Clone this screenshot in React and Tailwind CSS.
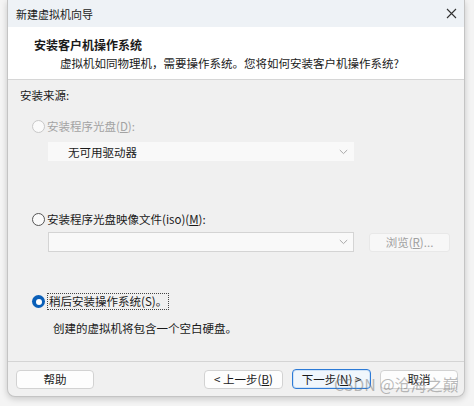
import React from "react";

const F = { fontFamily: '"Noto Sans CJK SC", "Noto Sans", sans-serif' };

function Chevron({ color = "#a8a8a8" }) {
  return (
    <svg width="9" height="6" viewBox="0 0 9 6" fill="none">
      <path d="M0.8 1 L4.5 4.6 L8.2 1" stroke={color} strokeWidth="1" />
    </svg>
  );
}

function Radio({ checked, disabled }) {
  if (checked) {
    return (
      <span className="flex h-[13px] w-[13px] items-center justify-center rounded-full bg-[#0a5fb8]">
        <span className="h-[6px] w-[6px] rounded-full bg-white" />
      </span>
    );
  }
  return (
    <span
      className={
        "h-[13px] w-[13px] rounded-full border bg-[#fafafa] " +
        (disabled ? "border-[#c8c8c8]" : "border-[#555555]")
      }
    />
  );
}

export default function App() {
  return (
    <div
      className="relative h-[406px] w-[474px] overflow-hidden bg-[#f4f4f4] pb-[9px] pl-[7px] pr-[9px] text-[11.5px] leading-[16px] text-[#1a1a1a]"
      style={F}
    >
      <div className="flex h-full flex-col overflow-hidden rounded-b-[8px] border-x border-b border-[#c4c4c4] bg-[#f0f0f0] shadow-[0_2px_6px_rgba(0,0,0,0.18)]">
        {/* title bar */}
        <div className="flex h-[27px] items-center justify-between bg-[#eef2f6] pl-[8px] pr-[7px]">
          <span className="text-[11px] text-[#1a1a1a]">新建虚拟机向导</span>
          <svg width="11" height="11" viewBox="0 0 11 11">
            <path d="M1 1 L10 10 M10 1 L1 10" stroke="#333" strokeWidth="1.1" />
          </svg>
        </div>
        {/* header */}
        <div className="flex h-[53px] flex-col border-b border-[#d6d6d6] bg-white pl-[26px] pt-[9px]">
          <span className="text-[12px] font-bold leading-[18px]">安装客户机操作系统</span>
          <span className="ml-[26px] mt-[1px] text-[11.5px] leading-[16px]">
            虚拟机如同物理机，需要操作系统。您将如何安装客户机操作系统?
          </span>
        </div>
        {/* content */}
        <div className="flex flex-1 flex-col pl-[12px] pr-[14px] pt-[7px]">
          <span>安装来源:</span>
          <div className="ml-[12px] mt-[15px] flex items-center gap-[2px] text-[#a3a3a3]">
            <Radio disabled />
            <span>
              安装程序光盘(<span className="underline">D</span>):
            </span>
          </div>
          <div className="ml-[28px] mt-[8px] flex h-[19px] w-[306px] items-center justify-between bg-[#f9f9f9] pl-[20px] pr-[6px]">
            <span className="text-[#1a1a1a]">无可用驱动器</span>
            <Chevron />
          </div>
          <div className="ml-[12px] mt-[50px] flex items-center gap-[2px]">
            <Radio />
            <span>
              安装程序光盘映像文件(iso)(<span className="underline">M</span>):
            </span>
          </div>
          <div className="ml-[28px] mt-[5px] flex items-center">
            <div className="flex h-[20px] w-[306px] items-center justify-end border border-[#d4d4d4] bg-[#f9f9f9] pr-[5px]">
              <Chevron />
            </div>
            <div className="ml-[15px] flex h-[19px] w-[81px] items-center justify-center rounded-[3px] border border-[#e8e8e8] bg-[#f7f7f7] text-[#a0a0a0]">
              浏览(<span className="underline">R</span>)...
            </div>
          </div>
          <div className="ml-[12px] mt-[41px] flex items-center gap-[2px]">
            <Radio checked />
            <span className="border border-dotted border-[#444] px-[1px] leading-[15px]">
              稍后安装操作系统(S)。
            </span>
          </div>
          <span className="ml-[33px] mt-[10px]">创建的虚拟机将包含一个空白硬盘。</span>
        </div>
        {/* footer */}
        <div className="flex h-[35px] items-center border-t border-[#d4d4d4] pl-[8px] pr-[6px]">
          <div className="flex h-[19px] w-[78px] items-center justify-center rounded-[4px] border border-[#d2d2d2] bg-[#fdfdfd]">
            帮助
          </div>
          <div className="ml-auto flex h-[19px] w-[79px] items-center justify-center rounded-[4px] border border-[#d2d2d2] bg-[#fdfdfd]">
            &lt; 上一步(<span className="underline">B</span>)
          </div>
          <div className="ml-[9px] flex h-[20px] w-[79px] items-center justify-center rounded-[4px] border border-[#2c7ad6] bg-[#f0f6fc] shadow-[inset_0_0_0_1px_#cfe2f6]">
            下一步(<span className="underline">N</span>) &gt;
          </div>
          <div className="ml-[9px] flex h-[19px] w-[78px] items-center justify-center rounded-[4px] border border-[#d2d2d2] bg-[#fdfdfd]">
            取消
          </div>
        </div>
      </div>
      {/* watermark */}
      <span className="pointer-events-none absolute left-[334px] top-[374px] text-[16px] leading-[20px] text-[rgba(120,120,120,0.5)]">
        CSDN @沧海之巅
      </span>
    </div>
  );
}
